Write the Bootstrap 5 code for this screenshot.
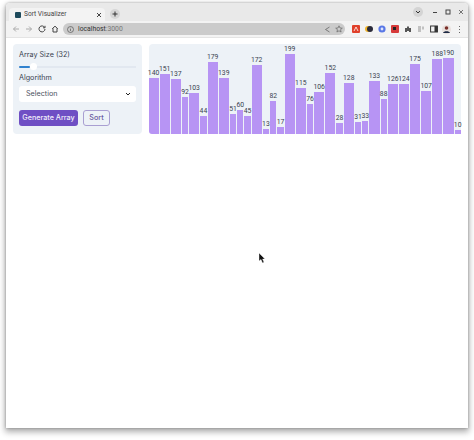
<!DOCTYPE html>
<html lang="en">
<head>
  <meta charset="UTF-8">
  <title>Sort Visualizer</title>
  <meta name="viewport" content="width=device-width, initial-scale=1">
  <link href="https://cdn.jsdelivr.net/npm/bootstrap@5.3.0/dist/css/bootstrap.min.css" rel="stylesheet">
  <style>
    html, body { height: 100%; }
    body { background: #fff; padding: 3px 6px 0; overflow: hidden; font-family: "Inter", "Liberation Sans", sans-serif; color: #3a4250; }
    .win { height: 425px; background: #fff; border-radius: 4px 4px 0 0; box-shadow: 0 3px 6px 1px rgba(0,0,0,.32), 0 0 3px rgba(0,0,0,.28); overflow: hidden; position: relative; }
    .titlebar { height: 18px; background: #e9e9e9; padding-left: 3px; }
    .tabx { width: 96px; height: 13px; margin-top: 5px; background: #f3f3f3; border-radius: 4px 4px 0 0; padding: 0 3px 0 6px; font: 6.6px/13px "Roboto", sans-serif; color: #444; }
    .fav { width: 6px; height: 6px; background: #1d4a5c; border-radius: 1px; margin-right: 3px; }
    .plus { width: 10px; height: 10px; margin: 6px 0 0 5px; border-radius: 50%; background: #d6d6d6; display: flex; align-items: center; justify-content: center; }
    .winbtns { padding-right: 1px; }
    .winbtns span { width: 13px; height: 18px; display: flex; align-items: center; justify-content: center; }
    .toolbarx { height: 17px; background: #f3f3f3; border-bottom: 1px solid #e4e4e4; padding-left: 3px; }
    .tb-ico { width: 13px; height: 13px; display: flex; align-items: center; justify-content: center; flex: none; }
    .pill { width: 282px; height: 12px; margin-left: 2px; border-radius: 6px; background: #cbcbcb; padding: 0 2px 0 4px; font: 6.8px/12px "Roboto", sans-serif; color: #333; }
    .pill i { font-style: normal; color: #777; }
    .exts { margin-left: 4px; }
    .pagex { padding: 6px 7px; gap: 7px; }
    .panelx { background: #edf2f7; border-radius: 4px; }
    .ctrl { width: 128.5px; height: 90px; flex: none; padding: 6px 6px; font-size: 7.2px; line-height: 10px; }
    .slid { background: #e2e8f0; margin: 6px 0 5px; position: relative; height: 2px; }
    .slid::before { content: ""; position: absolute; left: 0; top: 0; width: 11px; height: 2px; background: #3182ce; border-radius: 1px; }
    .slid::after { content: ""; position: absolute; left: 11px; top: -3px; width: 7px; height: 7px; background: #fff; border-radius: 50%; }
    .selx { height: 16px; margin-top: 3px; background: #fff; border-radius: 3px; padding: 0 5px 0 7px; font-size: 7.2px; color: #4a5160; }
    .btnsx { margin-top: 8px; gap: 5px; }
    .gen { width: 59px; height: 16px; background: #6f4fc4; color: #f2eefb; border-radius: 3px; font-weight: 500; font-size: 7.2px; line-height: 16px; text-align: center; }
    .srt { width: 27px; height: 16px; border: 1px solid #a99fd2; color: #6a5a9f; border-radius: 3px; font-weight: 500; font-size: 7.2px; line-height: 14px; text-align: center; }
    .chart { flex: 1; min-width: 0; height: 90px; gap: 1px; align-items: flex-end; }
    .colx { flex: 6.3 1 0; min-width: 0; white-space: nowrap; display: flex; flex-direction: column; align-items: center; font: 6.8px/10px "Roboto", sans-serif; color: #3a4250; }
    .colx.wide { flex-grow: 10.15; }
    .barx { background: #b794f4; align-self: stretch; }
    .colx:first-child .barx { border-bottom-left-radius: 3px; }
    .cursorx { position: absolute; left: 252px; top: 250px; }
  </style>
</head>
<body>
  <div class="win">
    <div class="titlebar d-flex">
      <div class="tabx d-flex align-items-center">
        <span class="fav"></span><span class="flex-grow-1">Sort Visualizer</span>
        <svg width="6" height="6" viewBox="0 0 6 6"><path d="M1 1l4 4M5 1L1 5" stroke="#444" stroke-width="1"/></svg>
      </div>
      <div class="plus"><svg width="6" height="6" viewBox="0 0 6 6"><path d="M3 .5v5M.5 3h5" stroke="#333" stroke-width="1"/></svg></div>
      <div class="winbtns d-flex ms-auto">
        <span><svg width="10" height="10" viewBox="0 0 10 10"><circle cx="5" cy="5" r="5" fill="#d4d4d4"/><path d="M3 4l2 2 2-2" fill="none" stroke="#333" stroke-width="1"/></svg></span>
        <span class="ms-1"><svg width="6" height="6" viewBox="0 0 6 6"><path d="M1 3.5h4" stroke="#444"/></svg></span>
        <span><svg width="6" height="6" viewBox="0 0 6 6"><rect x="1" y="1" width="4" height="4" fill="none" stroke="#444"/></svg></span>
        <span><svg width="6" height="6" viewBox="0 0 6 6"><path d="M1 1l4 4M5 1L1 5" stroke="#555" stroke-width=".8"/></svg></span>
      </div>
    </div>
    <div class="toolbarx d-flex align-items-center">
      <span class="tb-ico"><svg width="8" height="8" viewBox="0 0 8 8"><path d="M7 4H1.5M4 1.5L1.5 4 4 6.5" fill="none" stroke="#aaa"/></svg></span>
      <span class="tb-ico"><svg width="8" height="8" viewBox="0 0 8 8"><path d="M1 4h5.5M4 1.5L6.5 4 4 6.5" fill="none" stroke="#aaa"/></svg></span>
      <span class="tb-ico"><svg width="8" height="8" viewBox="0 0 8 8"><path d="M6.6 2.4A3 3 0 1 0 7 4M7 .8v2H5" fill="none" stroke="#444"/></svg></span>
      <span class="tb-ico"><svg width="8" height="8" viewBox="0 0 8 8"><path d="M1.2 3.8L4 1.2l2.8 2.6M2 3.4V7h4V3.4" fill="none" stroke="#444"/></svg></span>
      <div class="pill d-flex align-items-center">
        <svg class="me-1" width="7" height="7" viewBox="0 0 7 7"><circle cx="3.5" cy="3.5" r="3" fill="none" stroke="#555" stroke-width=".7"/><path d="M3.5 3v2M3.5 1.8v.6" stroke="#555" stroke-width=".7"/></svg>
        <span>localhost<i>:3000</i></span>
        <svg class="ms-auto" width="7" height="7" viewBox="0 0 7 7"><path d="M5.5 1L1.5 3.5l4 2.5" fill="none" stroke="#666" stroke-width=".8"/></svg>
        <svg class="ms-1 star-ico" width="8" height="8" viewBox="0 0 8 8"><path d="M4 .8l1 2.2 2.3.2-1.8 1.5.6 2.3L4 5.8 1.9 7l.6-2.3L.7 3.2 3 3z" fill="none" stroke="#666" stroke-width=".7"/></svg>
      </div>
      <div class="exts d-flex">
        <span class="tb-ico"><svg width="8" height="8" viewBox="0 0 8 8"><rect width="8" height="8" rx="1" fill="#e0402a"/><path d="M2 6l2-4 2 4" fill="none" stroke="#fff" stroke-width=".8"/></svg></span>
        <span class="tb-ico"><svg width="8" height="8" viewBox="0 0 8 8"><circle cx="3" cy="4" r="3" fill="#f0b429"/><circle cx="5" cy="4" r="3" fill="#2b2b3a"/></svg></span>
        <span class="tb-ico"><svg width="8" height="8" viewBox="0 0 8 8"><circle cx="4" cy="4" r="3.6" fill="#5a78e6"/><circle cx="4" cy="4" r="1.4" fill="#dfe5fb"/></svg></span>
        <span class="tb-ico"><svg width="8" height="8" viewBox="0 0 8 8"><rect width="8" height="8" rx="1" fill="#d63a3a"/><rect x="2" y="2" width="3" height="3" fill="#222"/></svg></span>
        <span class="tb-ico"><svg width="8" height="8" viewBox="0 0 8 8"><path d="M1 3h2V1.5h2V3h2v4H5V6H3v1H1z" fill="#555"/></svg></span>
        <span class="tb-ico"><svg width="8" height="8" viewBox="0 0 8 8"><path d="M1 2h3M1 4h3M1 6h3M6 1.5v3" fill="none" stroke="#777" stroke-width=".8"/></svg></span>
        <span class="tb-ico"><svg width="8" height="8" viewBox="0 0 8 8"><rect x=".6" y="1" width="6.8" height="6" fill="none" stroke="#333"/><rect x="4.5" y="1" width="3" height="6" fill="#333"/></svg></span>
        <span class="tb-ico"><svg width="9" height="9" viewBox="0 0 9 9"><circle cx="4.5" cy="4.5" r="4.5" fill="#e8e0dc"/><circle cx="4.5" cy="3" r="1.8" fill="#7a2f2a"/><path d="M1 8c.5-2.5 6.5-2.5 7 0z" fill="#1d2a44"/></svg></span>
        <span class="tb-ico"><svg width="3" height="9" viewBox="0 0 3 9"><path d="M1.5 1v.8M1.5 4.1v.8M1.5 7.2V8" stroke="#444"/></svg></span>
      </div>
    </div>

    <div class="pagex d-flex">
      <div class="panelx ctrl">
        <div>Array Size (32)</div>
        <div class="slid"></div>
        <div>Algorithm</div>
        <div class="selx d-flex align-items-center justify-content-between">
          <span>Selection</span>
          <svg width="6" height="6" viewBox="0 0 6 6"><path d="M1 2l2 2 2-2" fill="none" stroke="#222" stroke-width="1"/></svg>
        </div>
        <div class="btnsx d-flex">
          <div class="gen">Generate Array</div>
          <div class="srt">Sort</div>
        </div>
      </div>
      <div class="panelx chart d-flex" id="chart"></div>
    </div>

    <svg class="cursorx" width="8" height="11" viewBox="0 0 8 11"><path d="M1 0v8l2-1.5L4.5 10 6 9.3 4.6 6H7z" fill="#111" stroke="#fff" stroke-width=".4"/></svg>
  </div>

  <script src="https://cdn.jsdelivr.net/npm/bootstrap@5.3.0/dist/js/bootstrap.bundle.min.js"></script>
  <script>
    const values = [140,151,137,92,103,44,179,139,51,60,45,172,13,82,17,199,115,76,106,152,28,128,31,33,133,88,126,124,175,107,188,190,10];
    const chart = document.getElementById("chart");
    values.forEach(v => {
      const col = document.createElement("div");
      col.className = v > 99 ? "colx wide" : "colx";
      const label = document.createElement("span");
      label.textContent = v;
      col.appendChild(label);
      const bar = document.createElement("div");
      bar.className = "barx";
      bar.style.height = (v * 0.4) + "px";
      col.appendChild(bar);
      chart.appendChild(col);
    });
  </script>
</body>
</html>
